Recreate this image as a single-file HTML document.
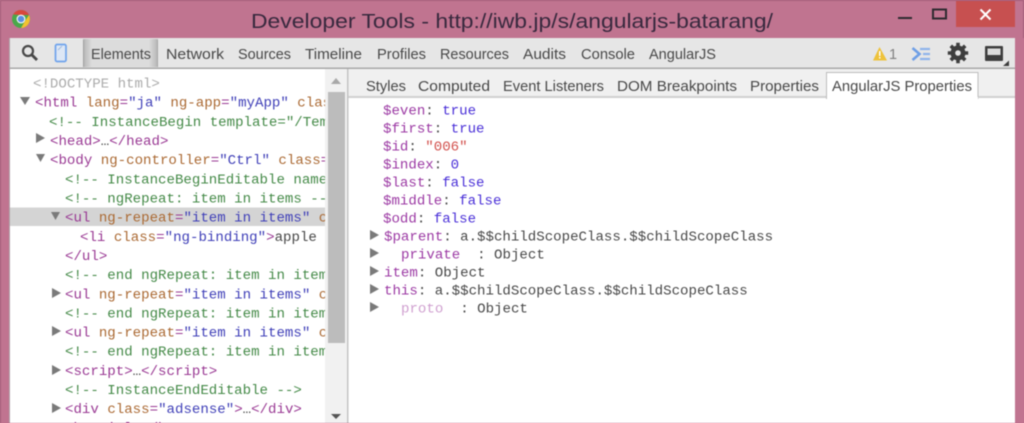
<!DOCTYPE html>
<html><head><meta charset="utf-8"><style>
html,body{margin:0;padding:0;width:1024px;height:423px;overflow:hidden;background:#c07490}
svg{display:block;filter:blur(.45px)}
.u{font-family:"Liberation Sans",sans-serif;font-size:14.5px;fill:#484848}
.m{font-family:"Liberation Mono",monospace;font-size:14.1px;white-space:pre;transform:translateY(.6px)}
.t{fill:#9a3a94}.a{fill:#ab6a34}.v{fill:#4040b8}.c{fill:#458a48}.g{fill:#484848}.d{fill:#ababab}
.k{fill:#9c3aa4}.b{fill:#4a30d8}.s{fill:#d2504c}.f{fill:#d0a0d0}
</style></head><body>
<svg width="1024" height="423" viewBox="0 0 1024 423" xmlns="http://www.w3.org/2000/svg">
<defs>
<linearGradient id="act" x1="0" x2="1" y1="0" y2="0"><stop offset="0" stop-color="#b4b4b4"/><stop offset=".12" stop-color="#dcdcdc"/><stop offset=".88" stop-color="#dcdcdc"/><stop offset="1" stop-color="#b4b4b4"/></linearGradient>
<clipPath id="lp"><rect x="10" y="69" width="315" height="354"/></clipPath>
</defs>
<rect width="1024" height="423" fill="#c07490"/>
<rect x="0" y="0" width="1024" height="1" fill="#a25e78"/>
<rect x="0" y="0" width="1" height="423" fill="#a25e78"/>
<rect x="1023" y="0" width="1" height="423" fill="#a25e78"/>

<!-- chrome logo -->
<circle cx="21" cy="19" r="9" fill="#4aa84a"/>
<path d="M13.2 14.5A9 9 0 0 1 29 15H21Z" fill="#d9473d"/>
<path d="M29 15A9 9 0 0 1 21 28L25 21Z" fill="#f2c230"/>
<circle cx="21" cy="19" r="4.4" fill="#fff"/><circle cx="21" cy="19" r="3.3" fill="#5a8fe0"/>

<text x="251" y="28" font-family="'Liberation Sans',sans-serif" font-size="20.5" fill="#38293e" textLength="522" lengthAdjust="spacingAndGlyphs">Developer Tools - http://iwb.jp/s/angularjs-batarang/</text>

<!-- window controls -->
<rect x="898" y="17" width="14" height="2" fill="#2e2a30"/>
<rect x="933" y="9.500" width="13" height="9" fill="none" stroke="#2e2a30" stroke-width="2"/>
<rect x="956" y="1" width="59" height="26" fill="#c75050"/>
<path d="M980.500 9.500L990.500 19.500M990.500 9.500L980.500 19.500" stroke="#fff" stroke-width="2"/>

<!-- devtools frame -->
<rect x="9.500" y="38" width="1005.500" height="385" fill="#fff"/>
<rect x="9.500" y="38" width="1005.500" height="30" fill="#e6e6e6"/>
<rect x="9.500" y="67.500" width="1005.500" height="1.500" fill="#a8a8a8"/>

<!-- toolbar icons -->
<circle cx="28" cy="51" r="5" fill="none" stroke="#484848" stroke-width="2.200"/>
<path d="M32 55L37 60" stroke="#484848" stroke-width="2.800"/>
<rect x="55.500" y="44.500" width="10.500" height="17" rx="1.500" fill="#dde7f5" stroke="#6fa3ec" stroke-width="1.700"/>
<path d="M58 50L62 46" stroke="#9fb9de" stroke-width="1"/>
<rect x="83" y="39" width="75" height="28" fill="url(#act)"/>
<rect x="83" y="40" width="1" height="27" fill="#a0a0a0"/>
<rect x="157" y="40" width="1" height="27" fill="#a8a8a8"/>

<text class="u" x="91" y="59" textLength="60" lengthAdjust="spacingAndGlyphs">Elements</text>
<text class="u" x="166" y="59" textLength="58" lengthAdjust="spacingAndGlyphs">Network</text>
<text class="u" x="238" y="59" textLength="53" lengthAdjust="spacingAndGlyphs">Sources</text>
<text class="u" x="305" y="59" textLength="57" lengthAdjust="spacingAndGlyphs">Timeline</text>
<text class="u" x="377" y="59" textLength="49" lengthAdjust="spacingAndGlyphs">Profiles</text>
<text class="u" x="440" y="59" textLength="69" lengthAdjust="spacingAndGlyphs">Resources</text>
<text class="u" x="523" y="59" textLength="43" lengthAdjust="spacingAndGlyphs">Audits</text>
<text class="u" x="581" y="59" textLength="54" lengthAdjust="spacingAndGlyphs">Console</text>
<text class="u" x="649" y="59" textLength="67" lengthAdjust="spacingAndGlyphs">AngularJS</text>

<path d="M879.500 47L887 60.500H873Z" fill="#eec23a"/>
<rect x="879" y="51" width="1.500" height="5" fill="#fff"/><rect x="879" y="57" width="1.500" height="1.500" fill="#fff"/>
<text class="u" x="889" y="59" style="fill:#808080">1</text>
<path d="M912.500 48L919.500 54L912.500 60" fill="none" stroke="#6f9fe6" stroke-width="2.600"/>
<path d="M920 49h10M923 54h7M920 59h10" stroke="#8fb4ea" stroke-width="2.200"/>
<circle cx="958" cy="53" r="7.500" fill="#3e3e3e"/>
<path d="M958 42.800v20.400M947.800 53h20.400M950.800 45.800l14.400 14.400M965.200 45.800l-14.400 14.400" stroke="#3e3e3e" stroke-width="3.600"/>
<circle cx="958" cy="53" r="2.800" fill="#e6e6e6"/>
<rect x="985" y="46" width="18" height="15" rx="1" fill="#3e3e3e"/>
<rect x="987.500" y="48.500" width="13" height="6.500" fill="#dcdcdc"/>
<path d="M1009 60.500V66H1003Z" fill="#3c3c3c"/>

<!-- left panel -->
<rect x="10" y="207.500" width="315" height="18.500" fill="#d4d4d4"/>
<g clip-path="url(#lp)">
<text class="m" y="87" x="33"><tspan class="d">&lt;!DOCTYPE html&gt;</tspan></text>
<text class="m" y="106.100" x="35"><tspan class="t">&lt;html</tspan> <tspan class="a">lang</tspan><tspan class="t">=</tspan><tspan class="v">"ja"</tspan> <tspan class="a">ng-app</tspan><tspan class="t">=</tspan><tspan class="v">"myApp"</tspan> <tspan class="a">class</tspan></text>
<text class="m c" y="125.300" x="49">&lt;!-- InstanceBegin template="/Templates</text>
<text class="m" y="144.500" x="50"><tspan class="t">&lt;head&gt;</tspan><tspan class="g">…</tspan><tspan class="t">&lt;/head&gt;</tspan></text>
<text class="m" y="163.600" x="50"><tspan class="t">&lt;body</tspan> <tspan class="a">ng-controller</tspan><tspan class="t">=</tspan><tspan class="v">"Ctrl"</tspan> <tspan class="a">class</tspan><tspan class="t">=</tspan></text>
<text class="m c" y="182.800" x="65">&lt;!-- InstanceBeginEditable name="x"</text>
<text class="m c" y="201.900" x="65">&lt;!-- ngRepeat: item in items --&gt;</text>
<text class="m" y="221.100" x="65"><tspan class="t">&lt;ul</tspan> <tspan class="a">ng-repeat</tspan><tspan class="t">=</tspan><tspan class="v">"item in items"</tspan> <tspan class="a">class</tspan></text>
<text class="m" y="240.200" x="80"><tspan class="t">&lt;li</tspan> <tspan class="a">class</tspan><tspan class="t">=</tspan><tspan class="v">"ng-binding"</tspan><tspan class="t">&gt;</tspan><tspan class="g">apple</tspan></text>
<text class="m t" y="259.400" x="65">&lt;/ul&gt;</text>
<text class="m c" y="278.500" x="65">&lt;!-- end ngRepeat: item in items --&gt;</text>
<text class="m" y="297.700" x="65"><tspan class="t">&lt;ul</tspan> <tspan class="a">ng-repeat</tspan><tspan class="t">=</tspan><tspan class="v">"item in items"</tspan> <tspan class="a">class</tspan></text>
<text class="m c" y="316.800" x="65">&lt;!-- end ngRepeat: item in items --&gt;</text>
<text class="m" y="336" x="65"><tspan class="t">&lt;ul</tspan> <tspan class="a">ng-repeat</tspan><tspan class="t">=</tspan><tspan class="v">"item in items"</tspan> <tspan class="a">class</tspan></text>
<text class="m c" y="355.100" x="65">&lt;!-- end ngRepeat: item in items --&gt;</text>
<text class="m" y="374.300" x="65"><tspan class="t">&lt;script&gt;</tspan><tspan class="g">…</tspan><tspan class="t">&lt;/script&gt;</tspan></text>
<text class="m c" y="393.400" x="65">&lt;!-- InstanceEndEditable --&gt;</text>
<text class="m" y="412.600" x="65"><tspan class="t">&lt;div</tspan> <tspan class="a">class</tspan><tspan class="t">=</tspan><tspan class="v">"adsense"</tspan><tspan class="t">&gt;</tspan><tspan class="g">…</tspan><tspan class="t">&lt;/div&gt;</tspan></text>
<text class="m t" y="431.500" x="65">&lt;h1&gt;title&lt;/h1&gt;</text>
</g>
<g fill="#7a7a7a">
<path d="M20 97H30L25 105Z"/>
<path d="M36 133V143L45 138Z"/>
<path d="M36 154H45L40.500 162Z"/>
<path d="M51 212H60L55.500 220Z"/>
<path d="M52 288V298L61 293Z"/>
<path d="M52 326V336L61 331Z"/>
<path d="M52 365V375L61 370Z"/>
<path d="M52 403V413L61 408Z"/>
<path d="M370 230V240L379 235Z"/>
<path d="M370 248V258L379 253Z"/>
<path d="M370 266V276L379 271Z"/>
<path d="M370 284V294L379 289Z"/>
<path d="M370 302V312L379 307Z"/>
</g>

<!-- scrollbar -->
<rect x="325" y="69" width="22" height="354" fill="#f1f1f1"/>
<rect x="347" y="69" width="1.500" height="354" fill="#c4c4c4"/>
<path d="M331 84L336 78L341 84Z" fill="#a8a8a8"/>
<rect x="328" y="92" width="17" height="251" fill="#bcbcbc"/>
<path d="M331 414H341L336 419Z" fill="#555"/>

<!-- subtabs -->
<rect x="348.500" y="69" width="666.500" height="27" fill="#f0f0f0"/>
<rect x="348.500" y="96" width="666.500" height="2" fill="#d0d0d0"/>
<rect x="826.500" y="72.500" width="151.500" height="26" fill="#fff" stroke="#bdbdbd"/>
<rect x="827" y="97" width="151" height="3" fill="#fff"/>
<text class="u" x="366" y="91" textLength="40" lengthAdjust="spacingAndGlyphs">Styles</text>
<text class="u" x="418" y="91" textLength="72" lengthAdjust="spacingAndGlyphs">Computed</text>
<text class="u" x="503" y="91" textLength="101" lengthAdjust="spacingAndGlyphs">Event Listeners</text>
<text class="u" x="617" y="91" textLength="120" lengthAdjust="spacingAndGlyphs">DOM Breakpoints</text>
<text class="u" x="750" y="91" textLength="69" lengthAdjust="spacingAndGlyphs">Properties</text>
<text class="u" x="832" y="91" textLength="140" lengthAdjust="spacingAndGlyphs">AngularJS Properties</text>

<!-- properties -->
<text class="m" x="383" y="114"><tspan class="k">$even</tspan><tspan class="g">: </tspan><tspan class="b">true</tspan></text>
<text class="m" x="383" y="132"><tspan class="k">$first</tspan><tspan class="g">: </tspan><tspan class="b">true</tspan></text>
<text class="m" x="383" y="150"><tspan class="k">$id</tspan><tspan class="g">: </tspan><tspan class="s">"006"</tspan></text>
<text class="m" x="383" y="168"><tspan class="k">$index</tspan><tspan class="g">: </tspan><tspan class="b">0</tspan></text>
<text class="m" x="383" y="186"><tspan class="k">$last</tspan><tspan class="g">: </tspan><tspan class="b">false</tspan></text>
<text class="m" x="383" y="204"><tspan class="k">$middle</tspan><tspan class="g">: </tspan><tspan class="b">false</tspan></text>
<text class="m" x="383" y="222"><tspan class="k">$odd</tspan><tspan class="g">: </tspan><tspan class="b">false</tspan></text>
<text class="m" x="384" y="240"><tspan class="k">$parent</tspan><tspan class="g">: a.$$childScopeClass.$$childScopeClass</tspan></text>
<text class="m" x="401" y="258"><tspan class="k">private</tspan><tspan class="g">  : Object</tspan></text>
<text class="m" x="384" y="276"><tspan class="k">item</tspan><tspan class="g">: Object</tspan></text>
<text class="m" x="384" y="294"><tspan class="k">this</tspan><tspan class="g">: a.$$childScopeClass.$$childScopeClass</tspan></text>
<text class="m" x="401" y="312"><tspan class="f">proto</tspan><tspan class="g">  : Object</tspan></text>

<!-- right edge -->
<rect x="1015" y="38" width="9" height="385" fill="#c07490"/>
<rect x="9" y="38" width="1" height="385" fill="#b0a0a8"/>
</svg>
</body></html>
